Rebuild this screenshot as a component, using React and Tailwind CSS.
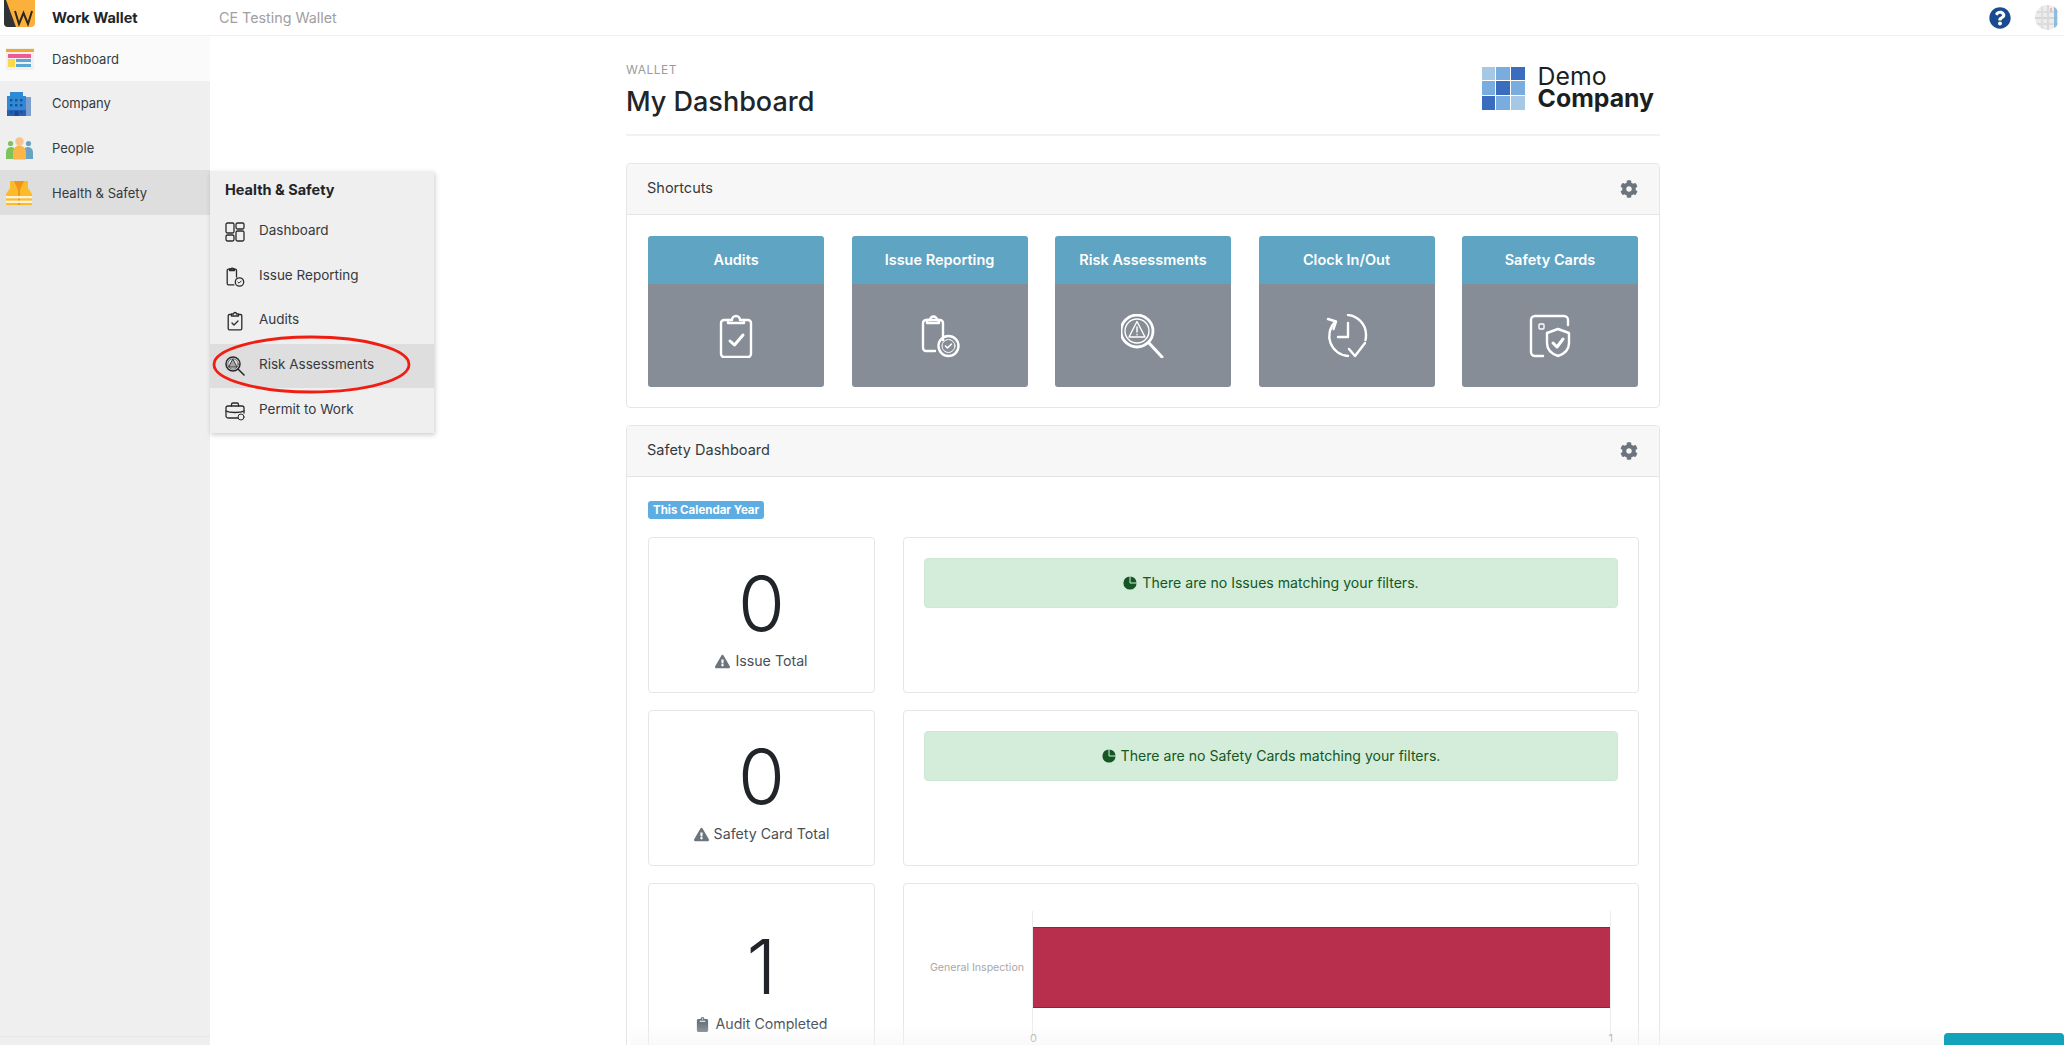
import React from "react";
import { FaCog, FaExclamationTriangle, FaClipboard, FaQuestionCircle } from "react-icons/fa";

const TileStroke = ({ children }) => (
  <svg width="44" height="44" viewBox="0 0 44 44" fill="none" stroke="white" strokeWidth="2.4" strokeLinecap="round" strokeLinejoin="round">
    {children}
  </svg>
);

const AuditTile = () => (
  <TileStroke>
    <path d="M14 6 H10 a3 3 0 0 0 -3 3 V40 a3 3 0 0 0 3 3 H34 a3 3 0 0 0 3 -3 V9 a3 3 0 0 0 -3 -3 H30" />
    <path d="M14 9 V6 H18 a4 4 0 0 1 8 0 H30 V9 Z" />
    <path d="M16 27 L20.5 31 L29 21" strokeWidth="3" />
  </TileStroke>
);
const IssueTile = () => (
  <TileStroke>
    <path d="M25 26 V9 a3 3 0 0 0 -3 -3 H8 a3 3 0 0 0 -3 3 V34 a3 3 0 0 0 3 3 H17" />
    <path d="M9 9 V6 H12 a3.5 3.5 0 0 1 7 0 H21 V9 Z" />
    <circle cx="30.5" cy="32" r="10" />
    <circle cx="30.5" cy="32" r="6.5" strokeWidth="1" />
    <path d="M27.5 32 L29.5 34 L33.5 30" strokeWidth="1.6" />
  </TileStroke>
);
const RiskTile = () => (
  <TileStroke>
    <circle cx="16" cy="17" r="16" strokeWidth="2.8" />
    <circle cx="16" cy="17" r="12" strokeWidth="1.4" />
    <path d="M16 7.5 L24 23 H8 Z" strokeWidth="1.4" />
    <path d="M16 13 V18 M16 20.6 V20.8" strokeWidth="1.5" />
    <path d="M28 29 L41 43" strokeWidth="3" />
  </TileStroke>
);
const ClockTile = () => (
  <TileStroke>
    <path d="M23 1 A20 20 0 0 1 41 20 A20 20 0 0 1 40.5 26" />
    <path d="M23 42 A20 20 0 0 1 10 8" />
    <path d="M3 5 L11 7.5 L8.5 15" />
    <path d="M23 9 V23 H13" />
    <path d="M24 35 L30 42 L40 29" />
  </TileStroke>
);
const SafetyTile = () => (
  <TileStroke>
    <path d="M40 11 V6 a4 4 0 0 0 -4 -4 H7 a4 4 0 0 0 -4 4 V38 a4 4 0 0 0 4 4 H15" />
    <rect x="11" y="10" width="5" height="5" rx="1" strokeWidth="1.4" />
    <path d="M30 15 L41 19 V29 C41 36 36 40 30 42 C24 40 19 36 19 29 V19 Z" />
    <path d="M25 29 L29 33 L35 25" strokeWidth="3" />
  </TileStroke>
);

const BlackIcon = ({ children }) => (
  <svg width="20" height="20" viewBox="0 0 20 20" fill="none" stroke="#2b2b2b" strokeWidth="1.3" strokeLinecap="round" strokeLinejoin="round" className="shrink-0">
    {children}
  </svg>
);
const DashIcon = () => (
  <BlackIcon>
    <rect x="1" y="1" width="8" height="10" rx="1.5" />
    <rect x="11" y="1" width="8" height="6" rx="1.5" />
    <rect x="1" y="13" width="8" height="6" rx="1.5" />
    <rect x="11" y="9" width="8" height="10" rx="1.5" />
  </BlackIcon>
);
const IssueIcon = () => (
  <BlackIcon>
    <path d="M11.5 10 V3.5 a1.3 1.3 0 0 0 -1.3 -1.3 H3.5 a1.3 1.3 0 0 0 -1.3 1.3 V16.5 a1.3 1.3 0 0 0 1.3 1.3 H9" />
    <path d="M4.5 3.5 V2 H6 a1.3 1.3 0 0 1 2.5 0 H9.5 V3.5 Z" />
    <circle cx="14.5" cy="15" r="4.2" />
    <path d="M12.8 15 L14 16.2 L16.2 14" strokeWidth="1" />
  </BlackIcon>
);
const AuditIcon = () => (
  <BlackIcon>
    <path d="M6 3.5 H4.5 a1.3 1.3 0 0 0 -1.3 1.3 V17.5 a1.3 1.3 0 0 0 1.3 1.3 H15.5 a1.3 1.3 0 0 0 1.3 -1.3 V4.8 a1.3 1.3 0 0 0 -1.3 -1.3 H14" />
    <path d="M6.5 5 V3 H8.5 a1.5 1.5 0 0 1 3 0 H13.5 V5 Z" />
    <path d="M7 12 L9 14 L13 10" />
  </BlackIcon>
);
const RiskIcon = () => (
  <BlackIcon>
    <circle cx="8" cy="8" r="7" strokeWidth="1.5" />
    <path d="M8 3.5 L12 11 H4 Z" fill="#a8a8a8" strokeWidth="0.9" />
    <circle cx="8" cy="8" r="5.2" strokeWidth="0.6" />
    <path d="M13 13 L19 19" strokeWidth="1.6" />
  </BlackIcon>
);
const PermitIcon = () => (
  <BlackIcon>
    <path d="M13 17 H3 a2 2 0 0 1 -2 -2 V7 a2 2 0 0 1 2 -2 H17 a2 2 0 0 1 2 2 V12" />
    <path d="M1 10 C5 12 15 12 19 10" />
    <path d="M6.5 5 V3.5 a1.5 1.5 0 0 1 1.5 -1.5 H12 a1.5 1.5 0 0 1 1.5 1.5 V5" />
    <circle cx="16" cy="16" r="3" strokeWidth="1" />
  </BlackIcon>
);

const NavDashboard = () => (
  <svg width="28" height="22" viewBox="0 0 28 22">
    <rect x="0" y="0" width="28" height="22" fill="#f0f0f0" />
    <rect x="0" y="1" width="28" height="3" fill="#f5a623" />
    <rect x="2" y="6" width="23" height="4" fill="#ee5a96" />
    <rect x="2" y="11" width="7" height="8" fill="#fbd84a" />
    <rect x="10" y="11" width="15" height="3" fill="#5ba6d2" />
    <rect x="10" y="16" width="15" height="3" fill="#5ba6d2" />
  </svg>
);
const NavCompany = () => (
  <svg width="26" height="27" viewBox="0 0 26 27">
    <rect x="17" y="6" width="8" height="19" fill="#7d9fd0" />
    <path d="M1 5 H4 V1 H17 V5 H20 V25 H1 Z" fill="#2f8ad6" />
    <rect x="1" y="19" width="19" height="6" fill="#2a5fb3" />
    <g fill="#1d4f9c">
      <rect x="4" y="8" width="2.4" height="2.4" /><rect x="9" y="8" width="2.4" height="2.4" /><rect x="14" y="8" width="2.4" height="2.4" />
      <rect x="4" y="13" width="2.4" height="2.4" /><rect x="9" y="13" width="2.4" height="2.4" /><rect x="14" y="13" width="2.4" height="2.4" />
      <rect x="4" y="20" width="2.4" height="2.4" /><rect x="14" y="20" width="2.4" height="2.4" />
    </g>
    <rect x="8.5" y="20" width="4" height="5" fill="#174a8f" />
  </svg>
);
const NavPeople = () => (
  <svg width="27" height="23" viewBox="0 0 27 23">
    <circle cx="4.5" cy="6.5" r="2.6" fill="#7cc35b" />
    <path d="M0 22 V15 a5 5 0 0 1 8 -4 V22 Z" fill="#7cc35b" />
    <circle cx="22.5" cy="6.5" r="2.6" fill="#66a3c4" />
    <path d="M27 22 V15 a5 5 0 0 0 -8 -4 V22 Z" fill="#66a3c4" />
    <circle cx="13.5" cy="4.5" r="4.2" fill="#f6c48a" />
    <path d="M7 22.5 V15 a6.5 6.5 0 0 1 13 0 V22.5 Z" fill="#fbb548" />
  </svg>
);
const NavVest = () => (
  <svg width="26" height="25" viewBox="0 0 26 25">
    <path d="M4 0 H22 V7 L26 13 V24 H0 V13 L4 7 Z" fill="#fbbb2a" />
    <path d="M8 0 H18 L14 9 V24 H12 V9 Z" fill="#f0941b" />
    <rect x="0" y="15" width="26" height="2.4" fill="#fdf3d2" />
    <rect x="0" y="19.6" width="26" height="2.4" fill="#fdf3d2" />
  </svg>
);

const WWLogo = () => (
  <svg width="31" height="28" viewBox="0 0 31 28">
    <path d="M0 0 H31 V23 a4 4 0 0 1 -4 4 H4 a4 4 0 0 1 -4 -4 Z" fill="#fbb03b" />
    <path d="M0 0 H2 L12 27 H4 a4 4 0 0 1 -4 -4 Z" fill="#2f3336" />
    <path d="M11 11 L15 24 L19.5 13 L24 24 L28 11" fill="none" stroke="#2f2a1e" strokeWidth="2" />
  </svg>
);

const Avatar = () => (
  <svg width="25" height="25" viewBox="0 0 25 25">
    <defs>
      <clipPath id="av"><circle cx="12.5" cy="12.5" r="12.5" /></clipPath>
    </defs>
    <g clipPath="url(#av)">
      <rect width="25" height="25" fill="#ececec" />
      <rect x="0" y="6" width="25" height="2" fill="#dcdcdc" />
      <rect x="0" y="12" width="25" height="2" fill="#d6d6d6" />
      <rect x="0" y="18" width="25" height="2" fill="#dcdcdc" />
      <rect x="6" y="0" width="2" height="25" fill="#dedede" />
      <rect x="12" y="0" width="2" height="25" fill="#dadada" />
      <rect x="15" y="3" width="2" height="4" fill="#eebcb8" />
      <rect x="19" y="0" width="3" height="25" fill="#8dbcdc" />
      <rect x="23" y="0" width="2" height="25" fill="#ffffff" />
    </g>
  </svg>
);

const PieIcon = () => (
  <svg width="14" height="14" viewBox="0 0 14 14" className="shrink-0">
    <circle cx="7" cy="7" r="6.6" fill="#155724" />
    <path d="M7 0 V7 H14" fill="none" stroke="#d4edda" strokeWidth="1" />
  </svg>
);

const navItems = [
  { label: "Dashboard", icon: <NavDashboard />, bg: "bg-[#fafafa]" },
  { label: "Company", icon: <NavCompany />, bg: "" },
  { label: "People", icon: <NavPeople />, bg: "" },
  { label: "Health & Safety", icon: <NavVest />, bg: "bg-[#dedede]" },
];

const flyItems = [
  { label: "Dashboard", icon: <DashIcon /> },
  { label: "Issue Reporting", icon: <IssueIcon /> },
  { label: "Audits", icon: <AuditIcon /> },
  { label: "Risk Assessments", icon: <RiskIcon />, active: true },
  { label: "Permit to Work", icon: <PermitIcon /> },
];

const tiles = [
  { label: "Audits", icon: <AuditTile /> },
  { label: "Issue Reporting", icon: <IssueTile /> },
  { label: "Risk Assessments", icon: <RiskTile /> },
  { label: "Clock In/Out", icon: <ClockTile /> },
  { label: "Safety Cards", icon: <SafetyTile /> },
];

const CardHeader = ({ title }) => (
  <div className="h-[51px] flex items-center justify-between px-[20px] pr-[21px] bg-[#f7f7f7] border-b border-[#e4e4e4] rounded-t-[4px]">
    <span className="text-[14.5px] text-[#343a40] pb-[2px]">{title}</span>
    <FaCog className="text-[#6c757d] text-[18px]" />
  </div>
);

const Stat = ({ value, label, icon, tall }) => (
  <div className={`${tall ? "h-[190px]" : "h-[156px]"} border border-[#e4e6e8] rounded-[4px] bg-white flex flex-col items-center justify-center pt-[5px]`}>
    <div className="text-[76px] leading-none font-light text-[#212529]">{value}</div>
    <div className="flex items-center gap-[5px] text-[14.2px] leading-[18px] text-[#495057] mt-[11px]">
      {icon}
      <span>{label}</span>
    </div>
  </div>
);

const Alert = ({ text }) => (
  <div className="h-[156px] border border-[#e4e6e8] rounded-[4px] bg-white p-[20px]">
    <div className="h-[50px] rounded-[4px] bg-[#d4edda] border border-[#cfe8d6] text-[#155724] text-[14.1px] flex items-center justify-center gap-[5px]">
      <PieIcon />
      <span>{text}</span>
    </div>
  </div>
);

export default function App() {
  return (
    <div className="relative h-screen w-full overflow-hidden bg-white font-['Inter','Liberation_Sans',sans-serif] text-[#212529]">
      <header className="h-[36px] flex items-center border-b border-[#f0f0f0]">
        <div className="w-[52px] pl-[4px] self-start shrink-0">
          <WWLogo />
        </div>
        <div className="w-[167px] text-[14.5px] font-bold text-[#212529] shrink-0">Work Wallet</div>
        <div className="text-[14.3px] text-[#a0a0a0]">CE Testing Wallet</div>
        <div className="ml-auto flex items-center gap-[24px] pr-[4px]">
          <FaQuestionCircle className="text-[#1a4b91] text-[22px]" />
          <Avatar />
        </div>
      </header>

      <div className="flex h-[1009px]">
        <aside className="w-[210px] shrink-0 bg-[#efefef] flex flex-col">
          {navItems.map((n) => (
            <div key={n.label} className={`h-[44.7px] flex items-center pt-[2px] ${n.bg}`}>
              <div className="w-[52px] pl-[6px] shrink-0 flex">{n.icon}</div>
              <span className="text-[13px] text-[#343a40]">{n.label}</span>
            </div>
          ))}
          <div className="mt-auto h-[9px] border-t border-[#e6e6e6]" />
        </aside>

        <main className="flex-1 pl-[416px]">
          <div className="w-[1034px]">
            <div className="h-[100px] border-b-2 border-[#f2f2f2] flex justify-between">
              <div>
                <div className="mt-[27px] text-[12px] leading-[14px] tracking-[0.5px] text-[#9b9b9b]">WALLET</div>
                <div className="mt-[8px] text-[27px] leading-[34px] font-medium text-[#212529]">My Dashboard</div>
              </div>
              <div className="flex items-center gap-[12px] pr-[6px] mt-[10px] mb-[4px]">
                <div className="grid grid-cols-3 gap-[1px] w-[43px] h-[43px] -translate-x-[1px]">
                  <div className="bg-[#a5c8e4]" />
                  <div className="bg-[#79addf]" />
                  <div className="bg-[#3a6dbd]" />
                  <div className="bg-[#79addf]" />
                  <div className="bg-[#3a6dbd]" />
                  <div className="bg-[#79addf]" />
                  <div className="bg-[#3a6dbd]" />
                  <div className="bg-[#79addf]" />
                  <div className="bg-[#a5c8e4]" />
                </div>
                <div className="flex flex-col pb-[1px] text-[24.8px] text-[#1c1f22]">
                  <span className="leading-[21.5px]">Demo</span>
                  <span className="leading-[21.5px] font-bold">Company</span>
                </div>
              </div>
            </div>

            <section className="mt-[27px] h-[245px] border border-[#e6e6e6] rounded-[4px]">
              <CardHeader title="Shortcuts" />
              <div className="flex justify-between px-[21px] pt-[21px]">
                {tiles.map((t) => (
                  <div key={t.label} className="w-[176px] h-[151px] rounded-[3px] overflow-hidden">
                    <div className="h-[48px] bg-[#5fa4c2] text-white text-[14.5px] font-semibold flex items-center justify-center">{t.label}</div>
                    <div className="h-[103px] bg-[#868d96] flex items-center justify-center">{t.icon}</div>
                  </div>
                ))}
              </div>
            </section>

            <section className="mt-[17px] border border-[#e6e6e6] rounded-[4px]">
              <CardHeader title="Safety Dashboard" />
              <div className="px-[21px] pt-[24px]">
                <div className="w-fit h-[18px] leading-[18px] px-[5px] rounded-[3px] bg-[#5dade2] text-white text-[11.5px] font-bold">This Calendar Year</div>
                <div className="mt-[18px] grid grid-cols-[227px_736px] gap-x-[28px] gap-y-[17px]">
                  <Stat value="0" label="Issue Total" icon={<FaExclamationTriangle className="text-[#6c757d] text-[15px]" />} />
                  <Alert text="There are no Issues matching your filters." />
                  <Stat value="0" label="Safety Card Total" icon={<FaExclamationTriangle className="text-[#6c757d] text-[15px]" />} />
                  <Alert text="There are no Safety Cards matching your filters." />
                  <Stat tall value="1" label="Audit Completed" icon={<FaClipboard className="text-[#6c757d] text-[15px]" />} />
                  <div className="h-[190px] border border-[#e4e6e8] rounded-[4px] bg-white flex">
                    <div className="w-[128px] shrink-0 h-[168px] flex items-center justify-end pr-[8px] text-[10.6px] text-[#a8a8a8]">General Inspection</div>
                    <div className="flex-1 mr-[27px] mt-[27px] h-[123px] border-x border-[#ececec] relative">
                      <div className="mt-[16px] h-[81px] bg-[#b82e4d] border-y border-[#9e1b3b]" />
                      <div className="absolute top-[122px] -left-[3px] text-[11px] leading-[11px] text-[#999]">0</div>
                      <div className="absolute top-[122px] -right-[3px] text-[11px] leading-[11px] text-[#999]">1</div>
                    </div>
                  </div>
                </div>
              </div>
            </section>
          </div>
        </main>
      </div>

      {/* flyout menu */}
      <div className="absolute left-[210px] top-[171px] w-[224px] h-[262px] bg-[#efefef] shadow-[1px_2px_5px_rgba(0,0,0,0.2)]">
        <div className="h-[39px] pl-[15px] pt-[8px] text-[14.5px] font-bold text-[#212529]">Health &amp; Safety</div>
        {flyItems.map((f) => (
          <div key={f.label} className={`h-[44.6px] flex items-center pl-[15px] gap-[14px] ${f.active ? "bg-[#dedede]" : ""}`}>
            {f.icon}
            <span className="text-[13.5px] text-[#343a40] -translate-y-[2px]">{f.label}</span>
          </div>
        ))}
      </div>

      {/* red annotation */}
      <svg className="absolute left-[210px] top-[332px]" width="206" height="66" viewBox="0 0 206 66" fill="none">
        <ellipse cx="101.5" cy="32.5" rx="97.5" ry="27.5" stroke="#f01d12" strokeWidth="2.8" />
      </svg>

      {/* faint fade along the bottom edge */}
      <div className="absolute left-[630px] right-[120px] bottom-0 h-[22px] bg-gradient-to-b from-transparent to-[#f6f6f6]/60 pointer-events-none" />

      {/* floating teal button */}
      <div className="absolute left-[1944px] top-[1033px] w-[120px] h-[40px] rounded-t-[4px] bg-[#13a2b8]" />
    </div>
  );
}
